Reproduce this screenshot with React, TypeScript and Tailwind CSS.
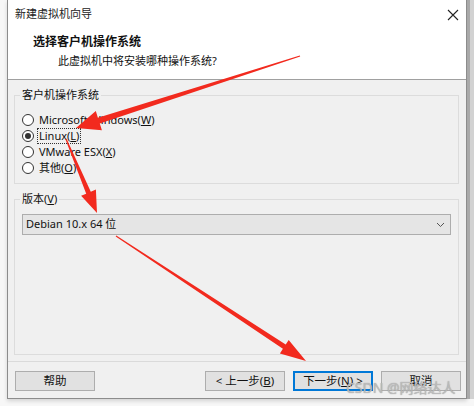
import React from "react";

type Pt = [number, number];

// tapered shaft + triangular head, tail -> tip
const arrowPoints = (
  tail: Pt,
  tip: Pt,
  headLen: number,
  headHalf: number,
  baseHalf: number,
  tailHalf = 0.6
): string => {
  const dx = tip[0] - tail[0];
  const dy = tip[1] - tail[1];
  const len = Math.hypot(dx, dy);
  const ux = dx / len;
  const uy = dy / len;
  const nx = -uy;
  const ny = ux;
  const bx = tip[0] - ux * headLen;
  const by = tip[1] - uy * headLen;
  const pts: Pt[] = [
    [tail[0] + nx * tailHalf, tail[1] + ny * tailHalf],
    [bx + nx * baseHalf, by + ny * baseHalf],
    [bx + nx * headHalf, by + ny * headHalf],
    tip,
    [bx - nx * headHalf, by - ny * headHalf],
    [bx - nx * baseHalf, by - ny * baseHalf],
    [tail[0] - nx * tailHalf, tail[1] - ny * tailHalf],
  ];
  return pts.map((p) => `${p[0].toFixed(1)},${p[1].toFixed(1)}`).join(" ");
};

const Key = ({ k }: { k: string }) => <span className="underline">{k}</span>;

const Radio = ({
  checked,
  children,
}: {
  checked?: boolean;
  children: React.ReactNode;
}) => (
  <div className="flex h-[16px] items-center gap-[3px]">
    <span className="flex h-[12px] w-[12px] items-center justify-center rounded-full border border-[#333] bg-white">
      {checked && <span className="h-[6px] w-[6px] rounded-full bg-[#333]" />}
    </span>
    <span
      className={
        checked
          ? "border border-dotted border-[#333] px-[1px] leading-[14px]"
          : "px-[2px] leading-[14px]"
      }
    >
      {children}
    </span>
  </div>
);

const Button = ({
  children,
  primary,
}: {
  children: React.ReactNode;
  primary?: boolean;
}) => (
  <div
    className={`flex h-[20px] w-[80px] items-center justify-center bg-[#e1e1e1] text-[11.5px] ${
      primary ? "border-2 border-[#0078d7]" : "border border-[#adadad]"
    }`}
  >
    {children}
  </div>
);

export default function App() {
  return (
    <div
      className="relative h-[406px] w-[474px] overflow-hidden bg-[#f7f7f7] text-[#111]"
      style={{ fontFamily: '"Noto Sans", "Noto Sans CJK SC", sans-serif' }}
    >
      <div className="flex">
        <div className="ml-[7px] flex h-[399px] w-[460px] flex-col border-x border-b border-[#8c8c8c] bg-[#f0f0f0] shadow-[0_2px_4px_rgba(0,0,0,0.15)]">
          {/* title bar + header */}
          <div className="h-[80px] border-b border-[#a0a0a0] bg-white">
            <div className="flex h-[29px] items-center justify-between pl-[7px] pr-[7px]">
              <span className="text-[11px] text-[#222]">新建虚拟机向导</span>
              <svg width="12" height="12" viewBox="0 0 12 12">
                <path d="M1 1L11 11M11 1L1 11" stroke="#222" strokeWidth="1.1" />
              </svg>
            </div>
            <div className="pl-[25px] pt-[5px] text-[12px] font-bold leading-[16px]">
              选择客户机操作系统
            </div>
            <div className="pl-[50px] pt-[3px] text-[11px] leading-[16px]">
              此虚拟机中将安装哪种操作系统?
            </div>
          </div>

          {/* body */}
          <div className="flex flex-1 flex-col text-[11px]">
            <div className="relative ml-[6px] mr-[7px] mt-[15px] h-[89px] border border-[#dcdcdc] pl-[7px] pt-[16px]">
              <span className="absolute left-[5px] top-[-9px] bg-[#f0f0f0] px-[2px] leading-[16px]">
                客户机操作系统
              </span>
              <Radio>
                Microsoft Windows(<Key k="W" />)
              </Radio>
              <Radio checked>
                Linux(<Key k="L" />)
              </Radio>
              <Radio>
                VMware ESX(<Key k="X" />)
              </Radio>
              <Radio>
                其他(<Key k="O" />)
              </Radio>
            </div>

            <div className="relative ml-[6px] mr-[7px] mt-[15px] h-[156px] border border-[#dcdcdc] px-[7px] pt-[14px]">
              <span className="absolute left-[5px] top-[-9px] bg-[#f0f0f0] px-[2px] leading-[16px]">
                版本(<Key k="V" />)
              </span>
              <div className="flex h-[21px] items-center justify-between border border-[#adadad] bg-[#e5e5e5] pl-[3px] pr-[5px]">
                <span>Debian 10.x 64 位</span>
                <svg width="9" height="6" viewBox="0 0 9 6">
                  <path d="M1 1L4.5 4.5L8 1" stroke="#555" strokeWidth="1" fill="none" />
                </svg>
              </div>
            </div>

            <div className="mt-[6px] flex flex-1 items-start justify-between border-t border-[#dadada] pl-[7px] pr-[5px] pt-[9px]">
              <Button>帮助</Button>
              <div className="flex gap-[8px]">
                <Button>
                  &lt; 上一步(<Key k="B" />)
                </Button>
                <Button primary>
                  下一步(<Key k="N" />) &gt;
                </Button>
                <Button>取消</Button>
              </div>
            </div>
          </div>
        </div>
        <div className="flex h-[399px]">
          <div className="w-[3px] bg-[#a9a9a9]" />
          <div className="w-[4px] bg-[#d2d2d2]" />
        </div>
      </div>

      {/* watermark */}
      <span className="absolute left-[346px] top-[379px] text-[14px] leading-[18px] text-[#c4c4c4]/80 [text-shadow:0_0_1px_#8a8a8a]">
        CSDN @网络达人
      </span>

      {/* red annotation arrows */}
      <svg className="pointer-events-none absolute inset-0" width="474" height="406">
        <polygon points={arrowPoints([300, 56], [76, 128], 24, 10, 3)} fill="#f22a1e" />
        <polygon points={arrowPoints([66, 139], [97, 213], 22, 8, 2.5)} fill="#f22a1e" />
        <polygon points={arrowPoints([116, 236], [306, 361], 26, 8, 2.5)} fill="#f22a1e" />
      </svg>
    </div>
  );
}
